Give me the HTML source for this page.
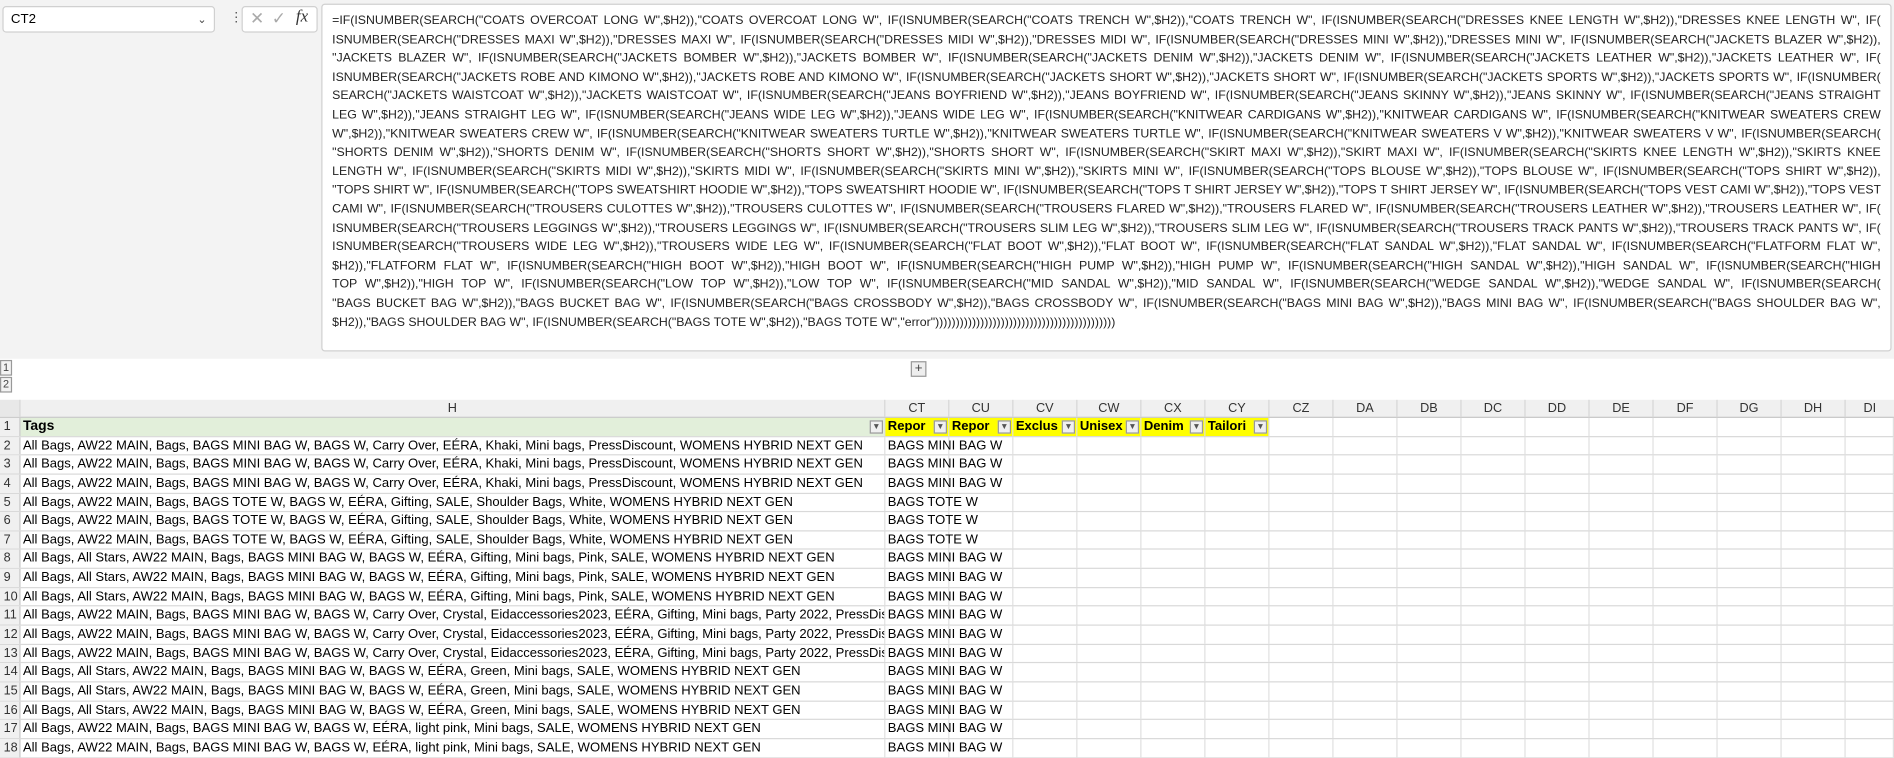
<!DOCTYPE html>
<html><head><meta charset="utf-8">
<style>
html,body{margin:0;padding:0;width:1894px;height:751px;overflow:hidden;background:#fff}
#w{position:absolute;left:0;top:0;width:1568px;height:622px;transform:scale(1.2079);transform-origin:0 0;font-family:"Liberation Sans",sans-serif;color:#000}
.top{position:absolute;left:0;top:0;width:1568px;height:297px;background:#f3f3f3}
.nb{position:absolute;left:2px;top:5px;width:176px;height:22px;background:#fff;border:1px solid #d0d0d0;border-radius:3px;box-sizing:border-box;font-size:11px;line-height:20px;padding-left:6px}
.nb .ch{position:absolute;right:6px;top:0;font-size:9px;color:#444}
.dots{position:absolute;left:190px;top:8px;font-size:11px;color:#555}
.fx{position:absolute;left:200px;top:5px;width:63px;height:22px;background:#fff;border:1px solid #d0d0d0;border-radius:3px;box-sizing:border-box}
.fx span{position:absolute;top:1px;font-size:14px;color:#aaa}
.fb{position:absolute;left:266px;top:3px;width:1300px;height:288px;background:#fff;border:1px solid #d0d0d0;border-radius:3px;box-sizing:border-box}
.fl{position:absolute;left:8px;width:1282px;font-size:10.2px;white-space:nowrap;text-align:justify;text-align-last:justify;overflow:hidden;height:15px;line-height:15px;color:#222}
.fl.last{text-align-last:left}
.ob{position:absolute;left:0;width:10px;height:13px;border:1px solid #999;box-sizing:border-box;font-size:9px;line-height:11px;text-align:center;color:#444;background:#f3f3f3}
.plus{position:absolute;left:754px;top:299px;width:13px;height:13px;border:1px solid #999;box-sizing:border-box;background:#eee;font-size:11px;line-height:11px;text-align:center;color:#444}
.ch-row{position:absolute;left:0;top:331px;width:1568px;height:15px;background:#f0f0f0;border-bottom:1px solid #c8c8c8;box-sizing:border-box;display:flex}
.ch-row div{height:14px;border-right:1px solid #d6d6d6;box-sizing:border-box;font-size:10.5px;line-height:14px;text-align:center;color:#333;flex:none}
.rows{position:absolute;left:0;top:346px;width:1568px}
.r{height:15.65px;display:flex;border-bottom:1px solid #d9d9d9;box-sizing:border-box}
.r div{flex:none;height:100%;border-right:1px solid #e0e0e0;box-sizing:border-box;font-size:10.8px;line-height:15px;white-space:nowrap;overflow:hidden;padding-left:2px;position:relative}
.r .rn{width:17px;background:#f0f0f0;color:#333;padding-left:3px;border-right:1px solid #c8c8c8;font-size:10.5px}
.r .h{width:716px}
.r .c{width:53px}
.r .dl{width:40px}
.y{background:#ff0;font-weight:bold}
.flt{position:absolute;right:1px;top:2px;width:11px;height:11px;border:1px solid #999;box-sizing:border-box;background:#f0f0f0;font-size:7px;line-height:9px;text-align:center;color:#555;font-weight:normal;padding:0!important}
</style></head><body><div id="w">
<div class="top">
<div class="nb">CT2<span class="ch">&#8964;</span></div>
<div class="dots">&#8942;</div>
<div class="fx"><span style="left:6px">&#10005;</span><span style="left:24px">&#10003;</span><span style="left:44px;color:#333;font-family:'Liberation Serif',serif;font-style:italic;font-size:14px">fx</span></div>
<div class="fb">
<div class="fl" style="top:6px">=IF(ISNUMBER(SEARCH("COATS OVERCOAT LONG W",$H2)),"COATS OVERCOAT LONG W", IF(ISNUMBER(SEARCH("COATS TRENCH W",$H2)),"COATS TRENCH W", IF(ISNUMBER(SEARCH("DRESSES KNEE LENGTH W",$H2)),"DRESSES KNEE LENGTH W", IF(</div>
<div class="fl" style="top:21.6px">ISNUMBER(SEARCH("DRESSES MAXI W",$H2)),"DRESSES MAXI W", IF(ISNUMBER(SEARCH("DRESSES MIDI W",$H2)),"DRESSES MIDI W", IF(ISNUMBER(SEARCH("DRESSES MINI W",$H2)),"DRESSES MINI W", IF(ISNUMBER(SEARCH("JACKETS BLAZER W",$H2)),</div>
<div class="fl" style="top:37.2px">"JACKETS BLAZER W", IF(ISNUMBER(SEARCH("JACKETS BOMBER W",$H2)),"JACKETS BOMBER W", IF(ISNUMBER(SEARCH("JACKETS DENIM W",$H2)),"JACKETS DENIM W", IF(ISNUMBER(SEARCH("JACKETS LEATHER W",$H2)),"JACKETS LEATHER W", IF(</div>
<div class="fl" style="top:52.8px">ISNUMBER(SEARCH("JACKETS ROBE AND KIMONO W",$H2)),"JACKETS ROBE AND KIMONO W", IF(ISNUMBER(SEARCH("JACKETS SHORT W",$H2)),"JACKETS SHORT W", IF(ISNUMBER(SEARCH("JACKETS SPORTS W",$H2)),"JACKETS SPORTS W", IF(ISNUMBER(</div>
<div class="fl" style="top:68.4px">SEARCH("JACKETS WAISTCOAT W",$H2)),"JACKETS WAISTCOAT W", IF(ISNUMBER(SEARCH("JEANS BOYFRIEND W",$H2)),"JEANS BOYFRIEND W", IF(ISNUMBER(SEARCH("JEANS SKINNY W",$H2)),"JEANS SKINNY W", IF(ISNUMBER(SEARCH("JEANS STRAIGHT</div>
<div class="fl" style="top:84px">LEG W",$H2)),"JEANS STRAIGHT LEG W", IF(ISNUMBER(SEARCH("JEANS WIDE LEG W",$H2)),"JEANS WIDE LEG W", IF(ISNUMBER(SEARCH("KNITWEAR CARDIGANS W",$H2)),"KNITWEAR CARDIGANS W", IF(ISNUMBER(SEARCH("KNITWEAR SWEATERS CREW</div>
<div class="fl" style="top:99.6px">W",$H2)),"KNITWEAR SWEATERS CREW W", IF(ISNUMBER(SEARCH("KNITWEAR SWEATERS TURTLE W",$H2)),"KNITWEAR SWEATERS TURTLE W", IF(ISNUMBER(SEARCH("KNITWEAR SWEATERS V W",$H2)),"KNITWEAR SWEATERS V W", IF(ISNUMBER(SEARCH(</div>
<div class="fl" style="top:115.2px">"SHORTS DENIM W",$H2)),"SHORTS DENIM W", IF(ISNUMBER(SEARCH("SHORTS SHORT W",$H2)),"SHORTS SHORT W", IF(ISNUMBER(SEARCH("SKIRT MAXI W",$H2)),"SKIRT MAXI W", IF(ISNUMBER(SEARCH("SKIRTS KNEE LENGTH W",$H2)),"SKIRTS KNEE</div>
<div class="fl" style="top:130.8px">LENGTH W", IF(ISNUMBER(SEARCH("SKIRTS MIDI W",$H2)),"SKIRTS MIDI W", IF(ISNUMBER(SEARCH("SKIRTS MINI W",$H2)),"SKIRTS MINI W", IF(ISNUMBER(SEARCH("TOPS BLOUSE W",$H2)),"TOPS BLOUSE W", IF(ISNUMBER(SEARCH("TOPS SHIRT W",$H2)),</div>
<div class="fl" style="top:146.4px">"TOPS SHIRT W", IF(ISNUMBER(SEARCH("TOPS SWEATSHIRT HOODIE W",$H2)),"TOPS SWEATSHIRT HOODIE W", IF(ISNUMBER(SEARCH("TOPS T SHIRT JERSEY W",$H2)),"TOPS T SHIRT JERSEY W", IF(ISNUMBER(SEARCH("TOPS VEST CAMI W",$H2)),"TOPS VEST</div>
<div class="fl" style="top:162px">CAMI W", IF(ISNUMBER(SEARCH("TROUSERS CULOTTES W",$H2)),"TROUSERS CULOTTES W", IF(ISNUMBER(SEARCH("TROUSERS FLARED W",$H2)),"TROUSERS FLARED W", IF(ISNUMBER(SEARCH("TROUSERS LEATHER W",$H2)),"TROUSERS LEATHER W", IF(</div>
<div class="fl" style="top:177.6px">ISNUMBER(SEARCH("TROUSERS LEGGINGS W",$H2)),"TROUSERS LEGGINGS W", IF(ISNUMBER(SEARCH("TROUSERS SLIM LEG W",$H2)),"TROUSERS SLIM LEG W", IF(ISNUMBER(SEARCH("TROUSERS TRACK PANTS W",$H2)),"TROUSERS TRACK PANTS W", IF(</div>
<div class="fl" style="top:193.2px">ISNUMBER(SEARCH("TROUSERS WIDE LEG W",$H2)),"TROUSERS WIDE LEG W", IF(ISNUMBER(SEARCH("FLAT BOOT W",$H2)),"FLAT BOOT W", IF(ISNUMBER(SEARCH("FLAT SANDAL W",$H2)),"FLAT SANDAL W", IF(ISNUMBER(SEARCH("FLATFORM FLAT W",</div>
<div class="fl" style="top:208.8px">$H2)),"FLATFORM FLAT W", IF(ISNUMBER(SEARCH("HIGH BOOT W",$H2)),"HIGH BOOT W", IF(ISNUMBER(SEARCH("HIGH PUMP W",$H2)),"HIGH PUMP W", IF(ISNUMBER(SEARCH("HIGH SANDAL W",$H2)),"HIGH SANDAL W", IF(ISNUMBER(SEARCH("HIGH</div>
<div class="fl" style="top:224.4px">TOP W",$H2)),"HIGH TOP W", IF(ISNUMBER(SEARCH("LOW TOP W",$H2)),"LOW TOP W", IF(ISNUMBER(SEARCH("MID SANDAL W",$H2)),"MID SANDAL W", IF(ISNUMBER(SEARCH("WEDGE SANDAL W",$H2)),"WEDGE SANDAL W", IF(ISNUMBER(SEARCH(</div>
<div class="fl" style="top:240px">"BAGS BUCKET BAG W",$H2)),"BAGS BUCKET BAG W", IF(ISNUMBER(SEARCH("BAGS CROSSBODY W",$H2)),"BAGS CROSSBODY W", IF(ISNUMBER(SEARCH("BAGS MINI BAG W",$H2)),"BAGS MINI BAG W", IF(ISNUMBER(SEARCH("BAGS SHOULDER BAG W",</div>
<div class="fl last" style="top:255.6px">$H2)),"BAGS SHOULDER BAG W", IF(ISNUMBER(SEARCH("BAGS TOTE W",$H2)),"BAGS TOTE W","error"))))))))))))))))))))))))))))))))))))))))))))</div>
</div>
</div>
<div class="ob" style="top:298px">1</div>
<div class="ob" style="top:312px">2</div>
<div class="plus">+</div>
<div class="ch-row">
<div style="width:17px;background:#e8e8e8"></div><div style="width:716px">H</div>
<div style="width:53px">CT</div><div style="width:53px">CU</div><div style="width:53px">CV</div><div style="width:53px">CW</div><div style="width:53px">CX</div><div style="width:53px">CY</div><div style="width:53px">CZ</div><div style="width:53px">DA</div><div style="width:53px">DB</div><div style="width:53px">DC</div><div style="width:53px">DD</div><div style="width:53px">DE</div><div style="width:53px">DF</div><div style="width:53px">DG</div><div style="width:53px">DH</div><div style="width:40px;border-right:none">DI</div>
</div>
<div class="rows">
<div class="r"><div class="rn">1</div><div class="h" style="background:#e2efda;font-weight:bold;font-size:11.5px">Tags<span class="flt">&#9660;</span></div><div class="c y">Repor<span class="flt">&#9660;</span></div><div class="c y">Repor<span class="flt">&#9660;</span></div><div class="c y">Exclus<span class="flt">&#9660;</span></div><div class="c y">Unisex<span class="flt">&#9660;</span></div><div class="c y">Denim<span class="flt">&#9660;</span></div><div class="c y">Tailori<span class="flt">&#9660;</span></div><div class="c"></div><div class="c"></div><div class="c"></div><div class="c"></div><div class="c"></div><div class="c"></div><div class="c"></div><div class="c"></div><div class="c"></div><div class="dl"></div></div>
<div class="r"><div class="rn">2</div><div class="h">All Bags, AW22 MAIN, Bags, BAGS MINI BAG W, BAGS W, Carry Over, EÉRA, Khaki, Mini bags, PressDiscount, WOMENS HYBRID NEXT GEN</div><div class="c" style="overflow:visible;z-index:1">BAGS MINI BAG W</div><div class="c"></div><div class="c"></div><div class="c"></div><div class="c"></div><div class="c"></div><div class="c"></div><div class="c"></div><div class="c"></div><div class="c"></div><div class="c"></div><div class="c"></div><div class="c"></div><div class="c"></div><div class="c"></div><div class="dl"></div></div>
<div class="r"><div class="rn">3</div><div class="h">All Bags, AW22 MAIN, Bags, BAGS MINI BAG W, BAGS W, Carry Over, EÉRA, Khaki, Mini bags, PressDiscount, WOMENS HYBRID NEXT GEN</div><div class="c" style="overflow:visible;z-index:1">BAGS MINI BAG W</div><div class="c"></div><div class="c"></div><div class="c"></div><div class="c"></div><div class="c"></div><div class="c"></div><div class="c"></div><div class="c"></div><div class="c"></div><div class="c"></div><div class="c"></div><div class="c"></div><div class="c"></div><div class="c"></div><div class="dl"></div></div>
<div class="r"><div class="rn">4</div><div class="h">All Bags, AW22 MAIN, Bags, BAGS MINI BAG W, BAGS W, Carry Over, EÉRA, Khaki, Mini bags, PressDiscount, WOMENS HYBRID NEXT GEN</div><div class="c" style="overflow:visible;z-index:1">BAGS MINI BAG W</div><div class="c"></div><div class="c"></div><div class="c"></div><div class="c"></div><div class="c"></div><div class="c"></div><div class="c"></div><div class="c"></div><div class="c"></div><div class="c"></div><div class="c"></div><div class="c"></div><div class="c"></div><div class="c"></div><div class="dl"></div></div>
<div class="r"><div class="rn">5</div><div class="h">All Bags, AW22 MAIN, Bags, BAGS TOTE W, BAGS W, EÉRA, Gifting, SALE, Shoulder Bags, White, WOMENS HYBRID NEXT GEN</div><div class="c" style="overflow:visible;z-index:1">BAGS TOTE W</div><div class="c"></div><div class="c"></div><div class="c"></div><div class="c"></div><div class="c"></div><div class="c"></div><div class="c"></div><div class="c"></div><div class="c"></div><div class="c"></div><div class="c"></div><div class="c"></div><div class="c"></div><div class="c"></div><div class="dl"></div></div>
<div class="r"><div class="rn">6</div><div class="h">All Bags, AW22 MAIN, Bags, BAGS TOTE W, BAGS W, EÉRA, Gifting, SALE, Shoulder Bags, White, WOMENS HYBRID NEXT GEN</div><div class="c" style="overflow:visible;z-index:1">BAGS TOTE W</div><div class="c"></div><div class="c"></div><div class="c"></div><div class="c"></div><div class="c"></div><div class="c"></div><div class="c"></div><div class="c"></div><div class="c"></div><div class="c"></div><div class="c"></div><div class="c"></div><div class="c"></div><div class="c"></div><div class="dl"></div></div>
<div class="r"><div class="rn">7</div><div class="h">All Bags, AW22 MAIN, Bags, BAGS TOTE W, BAGS W, EÉRA, Gifting, SALE, Shoulder Bags, White, WOMENS HYBRID NEXT GEN</div><div class="c" style="overflow:visible;z-index:1">BAGS TOTE W</div><div class="c"></div><div class="c"></div><div class="c"></div><div class="c"></div><div class="c"></div><div class="c"></div><div class="c"></div><div class="c"></div><div class="c"></div><div class="c"></div><div class="c"></div><div class="c"></div><div class="c"></div><div class="c"></div><div class="dl"></div></div>
<div class="r"><div class="rn">8</div><div class="h">All Bags, All Stars, AW22 MAIN, Bags, BAGS MINI BAG W, BAGS W, EÉRA, Gifting, Mini bags, Pink, SALE, WOMENS HYBRID NEXT GEN</div><div class="c" style="overflow:visible;z-index:1">BAGS MINI BAG W</div><div class="c"></div><div class="c"></div><div class="c"></div><div class="c"></div><div class="c"></div><div class="c"></div><div class="c"></div><div class="c"></div><div class="c"></div><div class="c"></div><div class="c"></div><div class="c"></div><div class="c"></div><div class="c"></div><div class="dl"></div></div>
<div class="r"><div class="rn">9</div><div class="h">All Bags, All Stars, AW22 MAIN, Bags, BAGS MINI BAG W, BAGS W, EÉRA, Gifting, Mini bags, Pink, SALE, WOMENS HYBRID NEXT GEN</div><div class="c" style="overflow:visible;z-index:1">BAGS MINI BAG W</div><div class="c"></div><div class="c"></div><div class="c"></div><div class="c"></div><div class="c"></div><div class="c"></div><div class="c"></div><div class="c"></div><div class="c"></div><div class="c"></div><div class="c"></div><div class="c"></div><div class="c"></div><div class="c"></div><div class="dl"></div></div>
<div class="r"><div class="rn">10</div><div class="h">All Bags, All Stars, AW22 MAIN, Bags, BAGS MINI BAG W, BAGS W, EÉRA, Gifting, Mini bags, Pink, SALE, WOMENS HYBRID NEXT GEN</div><div class="c" style="overflow:visible;z-index:1">BAGS MINI BAG W</div><div class="c"></div><div class="c"></div><div class="c"></div><div class="c"></div><div class="c"></div><div class="c"></div><div class="c"></div><div class="c"></div><div class="c"></div><div class="c"></div><div class="c"></div><div class="c"></div><div class="c"></div><div class="c"></div><div class="dl"></div></div>
<div class="r"><div class="rn">11</div><div class="h">All Bags, AW22 MAIN, Bags, BAGS MINI BAG W, BAGS W, Carry Over, Crystal, Eidaccessories2023, EÉRA, Gifting, Mini bags, Party 2022, PressDiscount</div><div class="c" style="overflow:visible;z-index:1;background:#fff">BAGS MINI BAG W</div><div class="c"></div><div class="c"></div><div class="c"></div><div class="c"></div><div class="c"></div><div class="c"></div><div class="c"></div><div class="c"></div><div class="c"></div><div class="c"></div><div class="c"></div><div class="c"></div><div class="c"></div><div class="c"></div><div class="dl"></div></div>
<div class="r"><div class="rn">12</div><div class="h">All Bags, AW22 MAIN, Bags, BAGS MINI BAG W, BAGS W, Carry Over, Crystal, Eidaccessories2023, EÉRA, Gifting, Mini bags, Party 2022, PressDiscount</div><div class="c" style="overflow:visible;z-index:1;background:#fff">BAGS MINI BAG W</div><div class="c"></div><div class="c"></div><div class="c"></div><div class="c"></div><div class="c"></div><div class="c"></div><div class="c"></div><div class="c"></div><div class="c"></div><div class="c"></div><div class="c"></div><div class="c"></div><div class="c"></div><div class="c"></div><div class="dl"></div></div>
<div class="r"><div class="rn">13</div><div class="h">All Bags, AW22 MAIN, Bags, BAGS MINI BAG W, BAGS W, Carry Over, Crystal, Eidaccessories2023, EÉRA, Gifting, Mini bags, Party 2022, PressDiscount</div><div class="c" style="overflow:visible;z-index:1;background:#fff">BAGS MINI BAG W</div><div class="c"></div><div class="c"></div><div class="c"></div><div class="c"></div><div class="c"></div><div class="c"></div><div class="c"></div><div class="c"></div><div class="c"></div><div class="c"></div><div class="c"></div><div class="c"></div><div class="c"></div><div class="c"></div><div class="dl"></div></div>
<div class="r"><div class="rn">14</div><div class="h">All Bags, All Stars, AW22 MAIN, Bags, BAGS MINI BAG W, BAGS W, EÉRA, Green, Mini bags, SALE, WOMENS HYBRID NEXT GEN</div><div class="c" style="overflow:visible;z-index:1">BAGS MINI BAG W</div><div class="c"></div><div class="c"></div><div class="c"></div><div class="c"></div><div class="c"></div><div class="c"></div><div class="c"></div><div class="c"></div><div class="c"></div><div class="c"></div><div class="c"></div><div class="c"></div><div class="c"></div><div class="c"></div><div class="dl"></div></div>
<div class="r"><div class="rn">15</div><div class="h">All Bags, All Stars, AW22 MAIN, Bags, BAGS MINI BAG W, BAGS W, EÉRA, Green, Mini bags, SALE, WOMENS HYBRID NEXT GEN</div><div class="c" style="overflow:visible;z-index:1">BAGS MINI BAG W</div><div class="c"></div><div class="c"></div><div class="c"></div><div class="c"></div><div class="c"></div><div class="c"></div><div class="c"></div><div class="c"></div><div class="c"></div><div class="c"></div><div class="c"></div><div class="c"></div><div class="c"></div><div class="c"></div><div class="dl"></div></div>
<div class="r"><div class="rn">16</div><div class="h">All Bags, All Stars, AW22 MAIN, Bags, BAGS MINI BAG W, BAGS W, EÉRA, Green, Mini bags, SALE, WOMENS HYBRID NEXT GEN</div><div class="c" style="overflow:visible;z-index:1">BAGS MINI BAG W</div><div class="c"></div><div class="c"></div><div class="c"></div><div class="c"></div><div class="c"></div><div class="c"></div><div class="c"></div><div class="c"></div><div class="c"></div><div class="c"></div><div class="c"></div><div class="c"></div><div class="c"></div><div class="c"></div><div class="dl"></div></div>
<div class="r"><div class="rn">17</div><div class="h">All Bags, AW22 MAIN, Bags, BAGS MINI BAG W, BAGS W, EÉRA, light pink, Mini bags, SALE, WOMENS HYBRID NEXT GEN</div><div class="c" style="overflow:visible;z-index:1">BAGS MINI BAG W</div><div class="c"></div><div class="c"></div><div class="c"></div><div class="c"></div><div class="c"></div><div class="c"></div><div class="c"></div><div class="c"></div><div class="c"></div><div class="c"></div><div class="c"></div><div class="c"></div><div class="c"></div><div class="c"></div><div class="dl"></div></div>
<div class="r"><div class="rn">18</div><div class="h">All Bags, AW22 MAIN, Bags, BAGS MINI BAG W, BAGS W, EÉRA, light pink, Mini bags, SALE, WOMENS HYBRID NEXT GEN</div><div class="c" style="overflow:visible;z-index:1">BAGS MINI BAG W</div><div class="c"></div><div class="c"></div><div class="c"></div><div class="c"></div><div class="c"></div><div class="c"></div><div class="c"></div><div class="c"></div><div class="c"></div><div class="c"></div><div class="c"></div><div class="c"></div><div class="c"></div><div class="c"></div><div class="dl"></div></div>
</div>
</div></body></html>
